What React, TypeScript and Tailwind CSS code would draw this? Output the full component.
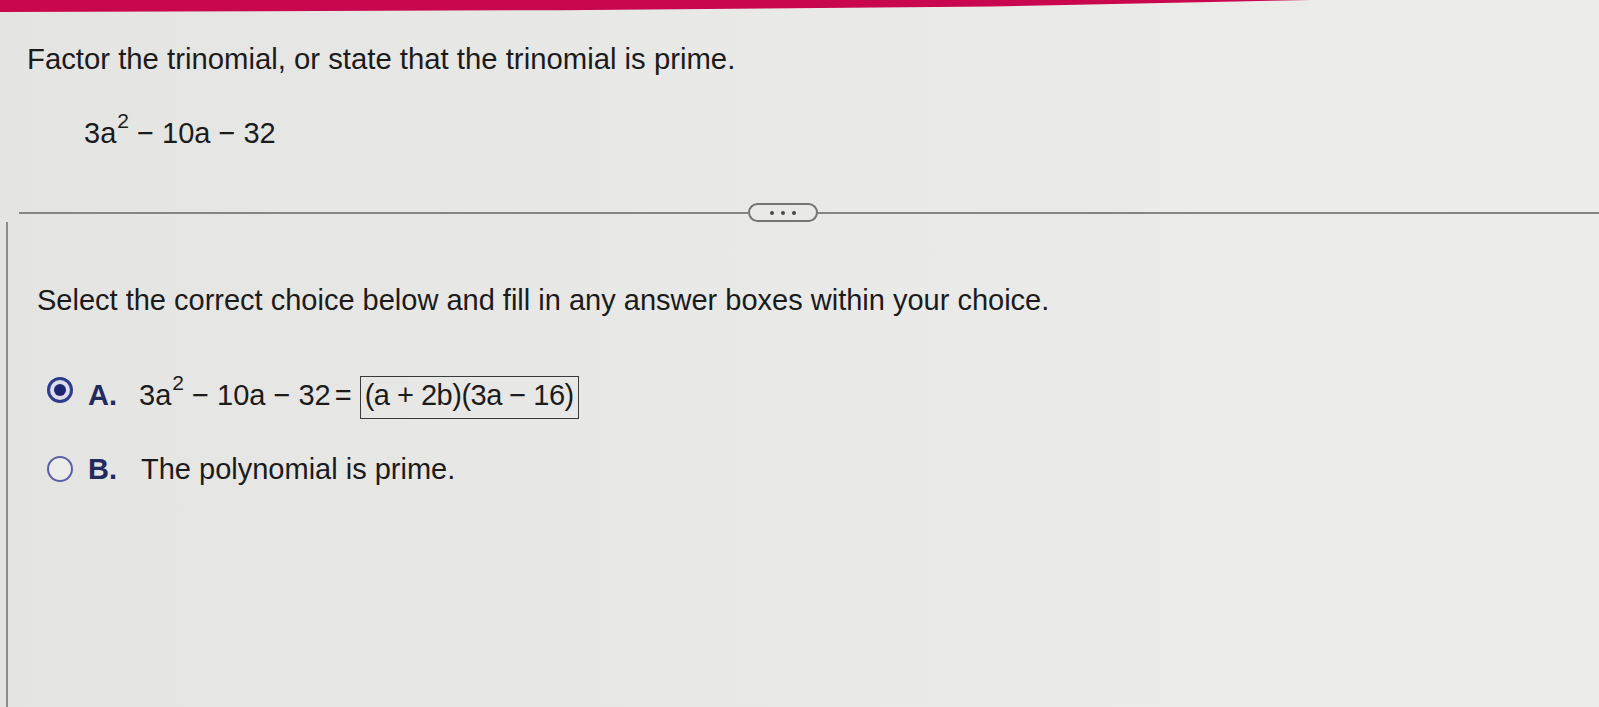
import React from 'react';

const font = { fontFamily: '"Liberation Sans", Arial, sans-serif' };

const Radio = ({ checked }: { checked: boolean }) =>
  checked ? (
    <span className="flex h-[26px] w-[26px] shrink-0 items-center justify-center rounded-full border-[3px] border-[#2f3b8c] bg-[#dcdcec]">
      <span className="h-[12px] w-[12px] rounded-full bg-[#1d2670]" />
    </span>
  ) : (
    <span className="h-[26px] w-[26px] shrink-0 rounded-full border-[2.5px] border-[#5a60a8] bg-[#ececea]" />
  );

const Expr = () => (
  <span>
    3a<sup className="ml-[1px] top-[-0.72em] text-[21px]">2</sup> − 10a − 32
  </span>
);

export default function App() {
  return (
    <div
      className="relative h-[707px] w-[1599px] overflow-hidden bg-gradient-to-r from-[#e4e4e2] via-[#e9e9e7] to-[#ececea] text-[#1b1b1b]"
      style={font}
    >
      {/* top bar */}
      <div className="h-[12px] w-full bg-[#c8074f] [clip-path:polygon(0_0,82%_0,62%_55%,35%_85%,0_100%)]" />

      <div className="pl-[27px] pt-[33px] text-[29.3px] leading-[28px]">
        Factor the trinomial, or state that the trinomial is prime.
      </div>

      <div className="pl-[84px] pt-[46px] text-[29px] leading-[28px]">
        <Expr />
      </div>

      {/* divider */}
      <div className="mt-[56px] flex items-center pl-[19px]">
        <div className="h-[2px] w-[729px] bg-[#858585]" />
        <div className="flex h-[19px] w-[70px] items-center justify-center gap-[7px] rounded-full border-2 border-[#747474]">
          <span className="h-[4px] w-[4px] rounded-full bg-[#4a4a4a]" />
          <span className="h-[4px] w-[4px] rounded-full bg-[#4a4a4a]" />
          <span className="h-[4px] w-[4px] rounded-full bg-[#4a4a4a]" />
        </div>
        <div className="h-[2px] flex-1 bg-[#858585]" />
      </div>

      <div className="ml-[6px] border-l-2 border-[#8c8c8c]">
        <div className="pl-[29px] pt-[64px] text-[29px] leading-[28px]">
          Select the correct choice below and fill in any answer boxes within your choice.
        </div>

        <div className="flex flex-col gap-[36px] pb-[300px] pl-[39px] pt-[62px] text-[29px] leading-[28px]">
          <div className="flex items-start">
            <span className="mt-[1px]">
              <Radio checked />
            </span>
            <div className="flex items-baseline">
              <span className="ml-[15px] w-[51px] font-bold text-[#232a5e]">A.</span>
              <Expr />
              <span className="ml-[4px]">=</span>
              <span className="ml-[8px] border-[1.5px] border-[#3a3a3a] px-[4px] pb-[9px] pt-[4px] tracking-[-0.5px]">
                (a + 2b)(3a − 16)
              </span>
            </div>
          </div>
          <div className="flex items-center">
            <Radio checked={false} />
            <span className="ml-[15px] w-[53px] font-bold text-[#232a5e]">B.</span>
            <span>The polynomial is prime.</span>
          </div>
        </div>
      </div>
    </div>
  );
}
